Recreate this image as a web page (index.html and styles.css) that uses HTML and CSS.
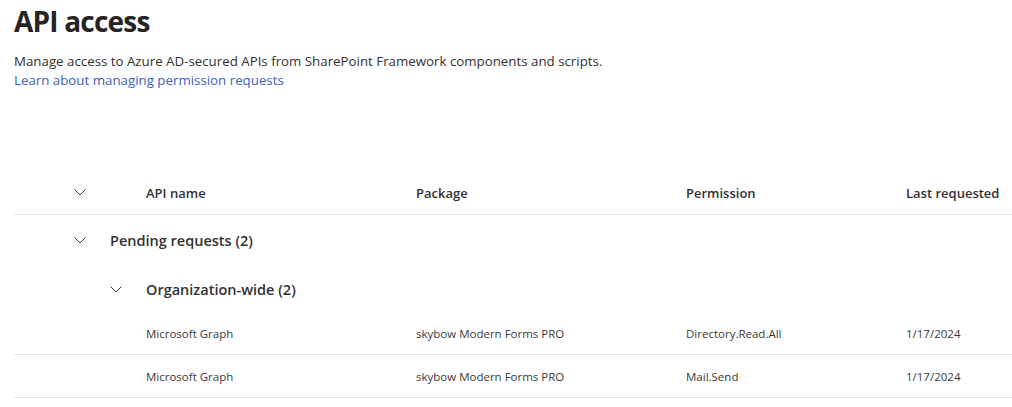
FILE: index.html
```html
<!DOCTYPE html>
<html lang="en">
<head>
<meta charset="utf-8">
<title>API access</title>
<link rel="stylesheet" href="styles.css">
</head>
<body>
<main class="page">
  <h1 class="title">API access</h1>
  <p class="desc">Manage access to Azure AD-secured APIs from SharePoint Framework components and scripts.<br><a class="link" href="#">Learn about managing permission requests</a></p>

  <section class="list">
    <div class="row header">
      <div class="cell chev-cell"><svg class="chev" viewBox="0 0 12 7" width="12" height="7"><path d="M0.5 0.5 L6 6 L11.5 0.5" fill="none" stroke="#323130" stroke-width="1"/></svg></div>
      <div class="cell">API name</div>
      <div class="cell">Package</div>
      <div class="cell">Permission</div>
      <div class="cell">Last requested</div>
    </div>

    <div class="group level1">
      <svg class="chev" viewBox="0 0 12 7" width="12" height="7"><path d="M0.5 0.5 L6 6 L11.5 0.5" fill="none" stroke="#323130" stroke-width="1"/></svg>
      <span class="group-title">Pending requests (2)</span>
    </div>
    <div class="group level2">
      <svg class="chev" viewBox="0 0 12 7" width="12" height="7"><path d="M0.5 0.5 L6 6 L11.5 0.5" fill="none" stroke="#323130" stroke-width="1"/></svg>
      <span class="group-title">Organization-wide (2)</span>
    </div>

    <div class="row data">
      <div class="cell"></div>
      <div class="cell">Microsoft Graph</div>
      <div class="cell">skybow Modern Forms PRO</div>
      <div class="cell">Directory.Read.All</div>
      <div class="cell">1/17/2024</div>
    </div>
    <div class="row data">
      <div class="cell"></div>
      <div class="cell">Microsoft Graph</div>
      <div class="cell">skybow Modern Forms PRO</div>
      <div class="cell">Mail.Send</div>
      <div class="cell">1/17/2024</div>
    </div>
  </section>
</main>
</body>
</html>
```

FILE: styles.css
```css
html, body {
  margin: 0;
  padding: 0;
  background: #ffffff;
}
body {
  font-family: "Open Sans", "Noto Sans", "Liberation Sans", sans-serif;
  color: #323130;
}
.page {
  padding: 0 0 0 14px;
}
.title {
  margin: 0;
  padding-top: 3px;
  font-size: 28px;
  line-height: 36px;
  font-weight: 700;
  color: #252423;
  letter-spacing: -0.8px;
}
.desc {
  margin: 13px 0 0 0;
  font-size: 13.3px;
  line-height: 19px;
  color: #323130;
}
.link {
  color: #3a5fc6;
  text-decoration: none;
}
.list {
  margin-top: 81px;
}
.row {
  display: grid;
  grid-template-columns: 132px 270px 270px 220px 1fr;
  align-items: center;
  border-bottom: 1px solid #e6e6e6;
}
.header {
  height: 43px;
  font-size: 13px;
  font-weight: 600;
}
.chev-cell {
  display: flex;
  justify-content: center;
}
.chev {
  display: block;
}
.group {
  display: flex;
  align-items: center;
}
.group-title {
  font-size: 14.5px;
  font-weight: 600;
}
.level1 {
  height: 51px;
  padding-left: 60px;
  gap: 24px;
}
.level2 {
  height: 46px;
  padding-left: 96px;
  gap: 24px;
}
.data {
  height: 42px;
  font-size: 11.5px;
  color: #3b3a39;
}
```
